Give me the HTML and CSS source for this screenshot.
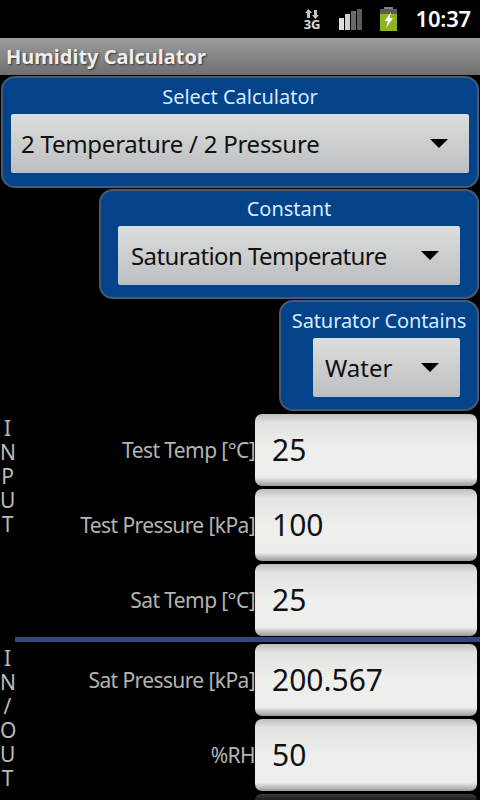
FILE: index.html
```html
<!DOCTYPE html>
<html lang="en">
<head>
	<meta charset="UTF-8">
	<title>Humidity Calculator</title>
	<link rel="stylesheet" href="styles.css">
</head>
<body>
	<div class="status">
		<div class="net">
			<svg width="14" height="10" viewBox="0 0 14 10"><path d="M3.500 0L7 4H5v5H2V4H0zM10.500 10L7 6h2V1h3v5h2z" fill="#c4c4c4"/></svg>
			<span>3G</span>
		</div>
		<svg class="signal" width="23" height="21" viewBox="0 0 23 21">
			<rect x="0" y="9" width="5" height="12" fill="#e0e0e0"/>
			<rect x="6" y="5" width="5" height="16" fill="#cfcfcf"/>
			<rect x="12" y="2" width="5" height="19" fill="#6a6a6a"/>
			<rect x="18" y="0" width="5" height="21" fill="#5c5c5c"/>
		</svg>
		<svg class="battery" width="17" height="24" viewBox="0 0 17 24">
			<rect x="4" y="0" width="9" height="3" fill="#808080"/>
			<rect x="0" y="2" width="17" height="22" fill="#5c5c50"/>
			<rect x="0" y="7" width="17" height="17" fill="#8db51d"/>
			<path d="M11 5L4.500 14H8L6 21l7-10H9.500z" fill="#fff"/>
		</svg>
		<span class="time">10:37</span>
	</div>
	<div class="titlebar">Humidity Calculator</div>

	<div class="panel panel-calc">
		<div class="panel-label">Select Calculator</div>
		<div class="select">
			<span>2 Temperature / 2 Pressure</span>
			<em></em>
		</div>
	</div>
	<div class="panel panel-const">
		<div class="panel-label">Constant</div>
		<div class="select">
			<span>Saturation Temperature</span>
			<em></em>
		</div>
	</div>
	<div class="panel panel-sat">
		<div class="panel-label">Saturator Contains</div>
		<div class="select">
			<span>Water</span>
			<em></em>
		</div>
	</div>

	<div class="section">
		<div class="side">INPUT</div>
		<div class="rows">
			<div class="row"><label>Test Temp [°C]</label><div class="field">25</div></div>
			<div class="row"><label>Test Pressure [kPa]</label><div class="field">100</div></div>
			<div class="row"><label>Sat Temp [°C]</label><div class="field">25</div></div>
		</div>
	</div>
	<div class="rule"></div>
	<div class="section">
		<div class="side">IN/OUT</div>
		<div class="rows">
			<div class="row"><label>Sat Pressure [kPa]</label><div class="field">200.567</div></div>
			<div class="row"><label>%RH</label><div class="field">50</div></div>
			<div class="row row-cut"><div class="field field-dark"></div></div>
		</div>
	</div>
</body>
</html>
```

FILE: styles.css
```css
*{
	margin:0;
	padding:0;
	box-sizing:border-box;
}
html,body{
	height:800px;
	overflow:hidden;
}
body{
	background:#000;
	font-family:"Noto Sans","Open Sans",sans-serif;
}
.status{
	height:38px;
	display:flex;
	justify-content:flex-end;
	align-items:center;
	padding-right:9px;
	color:#fff;
}
.net{
	display:flex;
	flex-direction:column;
	align-items:center;
	width:15px;
	margin-right:19px;
	margin-top:1px;
}
.net span{
	font-size:13px;
	font-weight:700;
	line-height:11px;
	color:#ddd;
}
.signal{
	margin-right:18px;
	margin-top:1px;
}
.battery{
	margin-right:19px;
	margin-top:0;
}
.time{
	font-size:22px;
	font-weight:600;
	line-height:24px;
	letter-spacing:-0.2px;
	margin-top:-2px;
}
.titlebar{
	height:37px;
	padding-left:6px;
	background:linear-gradient(#9c9c9c,#6f6f6f);
	color:#eee;
	font-size:20px;
	font-weight:700;
	line-height:37px;
	text-shadow:1px 1px 2px #333;
}
.panel{
	background:#04428a;
	border:2px solid #445a75;
	border-radius:14px;
	display:flex;
	flex-direction:column;
	align-items:center;
}
.panel-calc{
	height:112px;
	margin:1px 1px 1px 1px;
}
.panel-const{
	height:110px;
	margin:0 1px 1px 99px;
}
.panel-sat{
	height:111px;
	margin:0 1px 3px 279px;
}
.panel-label{
	height:36px;
	line-height:37px;
	font-size:20px;
	color:#d8ecff;
	white-space:nowrap;
}
.panel-sat .panel-label{
	letter-spacing:-0.1px;
}
.panel-const .panel-label{
	height:35px;
	line-height:35px;
}
.select{
	align-self:stretch;
	height:59px;
	display:flex;
	justify-content:space-between;
	align-items:center;
	background:linear-gradient(#dcdedd,#bcbec0);
	border-radius:2px;
	color:#111;
	font-size:24px;
	white-space:nowrap;
}
.panel-calc .select{
	margin:0 8px;
	padding:0 21px 0 10px;
	letter-spacing:-0.25px;
}
.panel-const .select{
	margin:0 17px;
	padding:0 21px 0 13px;
	letter-spacing:-0.6px;
}
.panel-sat .select{
	margin:0 17px 0 32px;
	padding:0 21px 0 12px;
}
.select em{
	width:0;
	height:0;
	border-left:9px solid transparent;
	border-right:9px solid transparent;
	border-top:9px solid #000;
}
.section{
	display:flex;
}
.side{
	width:15px;
	padding-top:2px;
	color:#bbb;
	font-size:21px;
	line-height:24px;
	text-align:center;
	word-break:break-all;
	line-break:anywhere;
}
.rows{
	flex:1;
	padding-right:3px;
	display:flex;
	flex-direction:column;
	gap:3px;
}
.row{
	display:flex;
	align-items:center;
	justify-content:flex-end;
	height:72px;
	flex-shrink:0;
}
.row label{
	color:#b4b4b4;
	font-size:21px;
	letter-spacing:-0.6px;
	white-space:nowrap;
}
.field{
	width:222px;
	height:72px;
	flex-shrink:0;
	padding-left:17px;
	border-radius:7px;
	background:linear-gradient(#bfc0be 0,#e2e3e1 12%,#eff0ee 50%,#eceeeb 88%,#9a9a9a 100%);
	color:#111;
	font-size:30px;
	line-height:72px;
}
.row-cut{
	height:6px;
}
.field-dark{
	height:6px;
	border-radius:7px 7px 0 0;
	background:linear-gradient(#3a3a3a,#1e1e1e);
}
.rule{
	height:5px;
	margin:1px 0 2px 15px;
	background:#2f4a7a;
}
```
